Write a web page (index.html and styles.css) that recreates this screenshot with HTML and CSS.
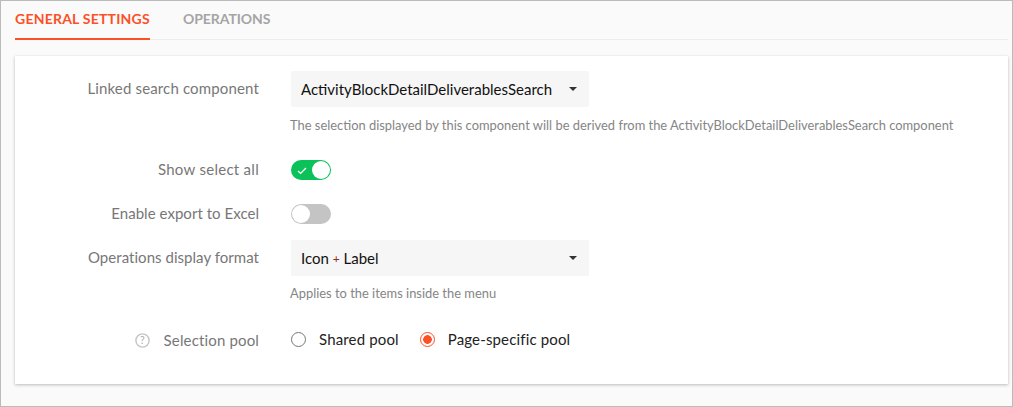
FILE: index.html
```html
<!DOCTYPE html>
<html lang="en">
<head>
<meta charset="utf-8">
<title>Settings</title>
<link rel="stylesheet" href="styles.css">
</head>
<body>
<div class="frame">
  <nav class="tabs">
    <a class="tab active">GENERAL SETTINGS</a>
    <a class="tab">OPERATIONS</a>
  </nav>
  <section class="card">
    <div class="row row-select">
      <div class="label">Linked search component</div>
      <div class="select"><span>ActivityBlockDetailDeliverablesSearch</span><i class="caret"></i></div>
    </div>
    <div class="help help-first">The selection displayed by this component will be derived from the ActivityBlockDetailDeliverablesSearch component</div>
    <div class="row row-toggle first-toggle">
      <div class="label label-loose">Show select all</div>
      <div class="toggle on">
        <svg class="check" width="10" height="8" viewBox="0 0 10 8"><path d="M1 4 3.6 6.4 9 1" fill="none" stroke="#fff" stroke-width="1.4"/></svg>
        <span class="knob"></span>
      </div>
    </div>
    <div class="row row-toggle second-toggle">
      <div class="label label-tight">Enable export to Excel</div>
      <div class="toggle"><span class="knob"></span></div>
    </div>
    <div class="row row-select third-select">
      <div class="label label-tight">Operations display format</div>
      <div class="select"><span>Icon <span class="plus">+</span> Label</span><i class="caret"></i></div>
    </div>
    <div class="help help-second">Applies to the items inside the menu</div>
    <div class="row row-radio">
      <div class="label">
        <svg class="q" width="15" height="15" viewBox="0 0 15 15"><circle cx="7.5" cy="7.5" r="6.6" fill="none" stroke="#c4c4c4" stroke-width="1.4"/><text x="7.5" y="11" text-anchor="middle" class="q-text">?</text></svg>
        <span class="pool-label">Selection pool</span>
      </div>
      <div class="radios">
        <div class="radio"><span class="dot"></span>Shared pool</div>
        <div class="radio checked"><span class="dot"></span>Page-specific pool</div>
      </div>
    </div>
  </section>
</div>
</body>
</html>
```
FILE: styles.css
```css
* { box-sizing: border-box; }
html, body { margin: 0; height: 100%; }
body { font-family: "Lato", "Liberation Sans", sans-serif; }
.frame {
  width: 1013px;
  height: 407px;
  border: 1px solid #bbb;
  background: #fafafa;
  padding: 0 4px 0 14px;
}
.tabs {
  display: flex;
  gap: 33px;
  height: 39px;
  border-bottom: 1px solid #ececec;
}
.tab {
  height: 39px;
  line-height: 36px;
  font-size: 14px;
  font-weight: 700;
  color: #a5a5a5;
  letter-spacing: -0.05px;
}
.tab.active {
  color: #fc5027;
  border-bottom: 2px solid #fc5027;
  letter-spacing: 0.22px;
}
.card {
  margin-top: 16px;
  height: 328px;
  background: #fff;
  box-shadow: 0 1px 3px rgba(0,0,0,.25);
  padding-top: 15px;
}
.row { display: flex; align-items: center; }
.label {
  width: 244px;
  text-align: right;
  font-size: 15px;
  letter-spacing: 0.15px;
  color: #777;
  margin-right: 32px;
  flex: none;
  display: flex;
  justify-content: flex-end;
  align-items: center;
  transform: translateY(-1px);
}
.label-loose { letter-spacing: 0.28px; }
.label-tight { letter-spacing: 0.04px; }
.select {
  width: 298px;
  height: 36px;
  background: #f6f6f6;
  display: flex;
  align-items: center;
  justify-content: space-between;
  padding: 0 12px 0 10px;
  font-size: 15px;
  color: #111;
  border-radius: 2px;
}
.plus { font-size: 12px; color: #8a2a20; vertical-align: 1px; }
.caret {
  width: 0; height: 0;
  border-left: 4px solid transparent;
  border-right: 4px solid transparent;
  border-top: 4px solid #333;
  display: block;
}
.help {
  margin-left: 275px;
  font-size: 12.9px;
  color: #858585;
  line-height: 16px;
}
.help-first { margin-top: 10px; }
.help-second { margin-top: 9px; }
.row-toggle { height: 20px; }
.first-toggle { margin-top: 27px; }
.second-toggle { margin-top: 24px; }
.third-select { margin-top: 16px; }
.row-radio { margin-top: 30px; height: 20px; }
.toggle {
  width: 40px;
  height: 20px;
  border-radius: 10px;
  background: #c4c4c4;
  position: relative;
}
.toggle .knob {
  position: absolute;
  top: 1px;
  left: 1px;
  width: 18px;
  height: 18px;
  border-radius: 50%;
  background: #fff;
}
.toggle.on { background: #0ac259; }
.toggle.on .knob { left: 21px; }
.check { position: absolute; left: 6px; top: 7px; }
.q { margin-right: 14px; }
.q-text { font-size: 10.5px; fill: #aaa; font-family: "Lato", sans-serif; }
.radios { display: flex; gap: 21px; margin-top: -4px; }
.radio {
  display: flex;
  align-items: center;
  font-size: 15px;
  letter-spacing: 0.15px;
  color: #222;
}
.dot {
  width: 15px;
  height: 15px;
  border-radius: 50%;
  border: 1.5px solid #777;
  margin-right: 13px;
  background: #fff;
  flex: none;
}
.radio.checked .dot {
  border-color: #fc5027;
  background: radial-gradient(circle, #fc5027 0 4px, #fff 4.6px);
}
```
